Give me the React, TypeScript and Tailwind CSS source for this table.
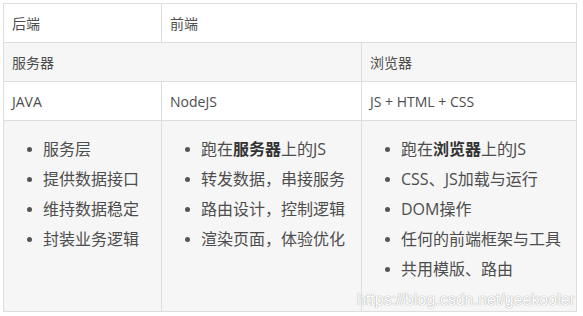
const cell = "border border-[#dddddd] px-2 text-left align-middle font-normal";

const Item = ({ children }: { children: React.ReactNode }) => (
  <li className="flex items-center h-[30px]">
    <span className="w-[5px] h-[5px] rounded-full bg-[#555555] mr-[11px]" />
    <span>{children}</span>
  </li>
);

const App = () => {
  return (
    <div className="relative w-[583px] h-[316px] bg-white pt-[3px] pl-[3px] text-[#4d4d4d] font-['Open_Sans','Noto_Sans_CJK_SC',sans-serif]">
      <table className="border-collapse text-[14px] w-[573px] table-fixed">
        <colgroup>
          <col className="w-[158px]" />
          <col className="w-[200px]" />
          <col className="w-[215px]" />
        </colgroup>
        <tbody>
          <tr className="h-[39px] bg-white">
            <td className={cell}>后端</td>
            <td className={cell} colSpan={2}>前端</td>
          </tr>
          <tr className="h-[39px] bg-[#f6f6f6]">
            <td className={cell} colSpan={2}>服务器</td>
            <td className={cell}>浏览器</td>
          </tr>
          <tr className="h-[39px] bg-white">
            <td className={cell}>JAVA</td>
            <td className={cell}>NodeJS</td>
            <td className={cell}>JS + HTML + CSS</td>
          </tr>
          <tr className="h-[191px] bg-[#f6f6f6] text-[16px]">
            <td className={cell + " align-top"}>
              <ul className="pl-[15px] pt-[13px]">
                <Item>服务层</Item>
                <Item>提供数据接口</Item>
                <Item>维持数据稳定</Item>
                <Item>封装业务逻辑</Item>
              </ul>
            </td>
            <td className={cell + " align-top"}>
              <ul className="pl-[15px] pt-[13px]">
                <Item>跑在<b className="font-bold text-[#333]">服务器</b>上的JS</Item>
                <Item>转发数据，串接服务</Item>
                <Item>路由设计，控制逻辑</Item>
                <Item>渲染页面，体验优化</Item>
              </ul>
            </td>
            <td className={cell + " align-top"}>
              <ul className="pl-[15px] pt-[13px]">
                <Item>跑在<b className="font-bold text-[#333]">浏览器</b>上的JS</Item>
                <Item>CSS、JS加载与运行</Item>
                <Item>DOM操作</Item>
                <Item>任何的前端框架与工具</Item>
                <Item>共用模版、路由</Item>
              </ul>
            </td>
          </tr>
        </tbody>
      </table>
      <div className="absolute left-[357px] top-[288px] text-[16px] text-white font-['Liberation_Sans',Arial,sans-serif] [text-shadow:0_0_1px_#aaa,0_0_1px_#aaa]">
        https://blog.csdn.net/geekooler
      </div>
    </div>
  );
};

export default App;
